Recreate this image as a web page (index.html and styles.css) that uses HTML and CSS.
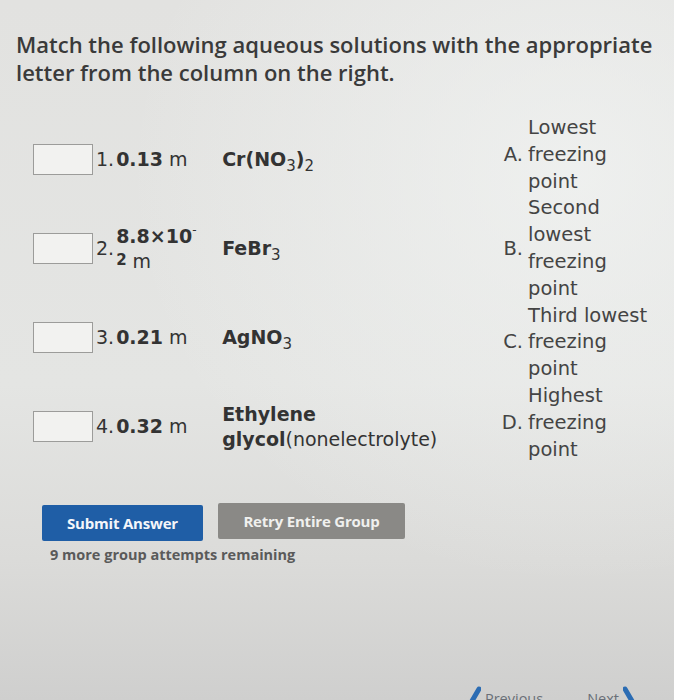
FILE: index.html
```html
<!DOCTYPE html>
<html lang="en">
<head>
<meta charset="utf-8">
<title>Match</title>
<link rel="stylesheet" href="styles.css">
</head>
<body>
<div class="page">
  <h1 class="title">Match the following aqueous solutions with the appropriate letter from the column on the right.</h1>

  <div class="main">
    <div class="items">
      <div class="box"></div>
      <div class="num">1.</div>
      <div class="val"><b>0.13</b> m</div>
      <div class="formula">Cr(NO<sub>3</sub>)<sub>2</sub></div>

      <div class="box"></div>
      <div class="num">2.</div>
      <div class="val"><b>8.8×10</b><sup>-</sup><br><sup class="two">2</sup> m</div>
      <div class="formula">FeBr<sub>3</sub></div>

      <div class="box"></div>
      <div class="num">3.</div>
      <div class="val"><b>0.21</b> m</div>
      <div class="formula">AgNO<sub>3</sub></div>

      <div class="box"></div>
      <div class="num">4.</div>
      <div class="val"><b>0.32</b> m</div>
      <div class="formula"><b>Ethylene glycol</b>(nonelectrolyte)</div>
    </div>

    <div class="choices">
      <div class="letter">A.</div>
      <div class="desc">Lowest freezing point</div>
      <div class="letter">B.</div>
      <div class="desc">Second lowest freezing point</div>
      <div class="letter">C.</div>
      <div class="desc">Third lowest freezing point</div>
      <div class="letter">D.</div>
      <div class="desc">Highest freezing point</div>
    </div>
  </div>

  <div class="actions">
    <button class="btn btn-submit">Submit Answer</button>
    <button class="btn btn-retry">Retry Entire Group</button>
  </div>
  <div class="attempts">9 more group attempts remaining</div>

  <div class="nav">
    <span class="nav-item">
      <svg class="chev" width="12" height="30" viewBox="0 0 12 30"><path d="M10 3 L3 15 L10 27" fill="none" stroke="#2b6cb3" stroke-width="5" stroke-linecap="round" stroke-linejoin="round"/></svg>
      <span class="nav-text">Previous</span>
    </span>
    <span class="nav-item">
      <span class="nav-text">Next</span>
      <svg class="chev" width="12" height="30" viewBox="0 0 12 30"><path d="M2 3 L9 15 L2 27" fill="none" stroke="#2b6cb3" stroke-width="5" stroke-linecap="round" stroke-linejoin="round"/></svg>
    </span>
  </div>
</div>
</body>
</html>
```

FILE: styles.css
```css
html, body {
  margin: 0;
  height: 100%;
  overflow: hidden;
}
body {
  background:
    radial-gradient(ellipse at 85% 25%, rgba(243,245,244,0.7) 0%, rgba(243,245,244,0) 55%),
    linear-gradient(180deg, #e2e2e0 0%, #e4e5e3 55%, #dbdbd9 80%, #cfcfce 100%);
  color: #333;
  font-family: "DejaVu Sans", Verdana, sans-serif;
}
.page {
  padding: 30px 20px 0 16px;
}
.title {
  margin: 0;
  font-family: "Open Sans", "Liberation Sans", sans-serif;
  font-weight: 600;
  font-size: 22px;
  line-height: 28px;
  color: #3a3a3a;
}
.main {
  display: flex;
  align-items: flex-start;
  margin-top: 29px;
}
.items {
  display: grid;
  grid-template-columns: 60px auto 106px auto;
  row-gap: 49px;
  align-items: center;
  margin-top: 29px;
  margin-left: 17px;
  font-size: 19px;
  line-height: 24.5px;
  color: #333;
}
.box {
  width: 58px;
  height: 29px;
  border: 1px solid #9c9c9a;
  background: #f2f2f0;
}
.num {
  padding-left: 3px;
  padding-right: 2px;
}
.val sup {
  font-size: 12px;
  line-height: 0;
  vertical-align: 9px;
}
.val sup.two {
  vertical-align: 3px;
  font-size: 15px;
  font-weight: bold;
}
.formula {
  font-weight: bold;
  width: 230px;
}
.formula sub {
  font-weight: normal;
  font-size: 15px;
  line-height: 0;
  vertical-align: -5px;
}
.formula:last-child {
  font-weight: normal;
}
.choices {
  margin-left: auto;
  display: grid;
  grid-template-columns: 22px 126px;
  column-gap: 5px;
  align-items: center;
  font-size: 19.5px;
  line-height: 26.8px;
  color: #444;
}
.letter {
  text-align: right;
}
.actions {
  display: flex;
  gap: 15px;
  margin-top: 40px;
  margin-left: 26px;
}
.btn {
  border: none;
  border-radius: 2px;
  font-family: "Open Sans", "Liberation Sans", sans-serif;
  font-weight: 700;
  font-size: 15px;
  height: 36px;
  padding: 0;
  letter-spacing: -0.2px;
}
.btn-submit {
  width: 161px;
  background: #1f5ea6;
  color: #f4f6fa;
  margin-top: 2px;
}
.btn-retry {
  width: 187px;
  background: #8a8986;
  color: #f0f0ee;
}
.attempts {
  margin-top: 4px;
  margin-left: 34px;
  font-family: "Open Sans", "Liberation Sans", sans-serif;
  font-weight: 700;
  font-size: 14.5px;
  line-height: 20px;
  color: #5a5a5a;
}
.nav {
  display: flex;
  justify-content: flex-end;
  gap: 44px;
  margin-top: 121px;
  padding-right: 19px;
}
.nav-item {
  display: flex;
  align-items: flex-start;
  gap: 4px;
}
.nav-text {
  font-family: "Open Sans", "Liberation Sans", sans-serif;
  font-size: 14.5px;
  line-height: 20px;
  color: #6a6f78;
  padding-top: 3px;
}
.chev {
  display: block;
}
```
